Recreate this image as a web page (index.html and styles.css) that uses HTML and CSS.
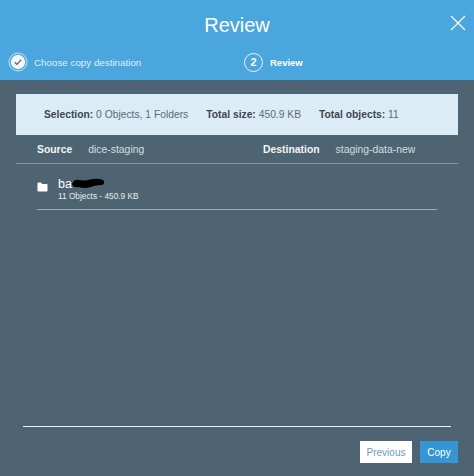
FILE: index.html
```html
<!DOCTYPE html>
<html lang="en">
<head>
    <meta charset="UTF-8">
    <meta name="viewport" content="width=device-width, initial-scale=1.0">
    <title>Review</title>
    <link rel="stylesheet" href="styles.css">
</head>
<body>
    <div class="modal">
        <!-- Header with steps -->
        <header class="modal-header">
            <h1>Review</h1>
            <svg class="close" width="16" height="16" viewBox="0 0 16 16">
                <path d="M1 1 L15 15 M15 1 L1 15" stroke="#ffffff" stroke-width="1.2" fill="none"/>
            </svg>
            <div class="steps">
                <div class="step done">
                    <svg width="20" height="20" viewBox="0 0 20 20">
                        <circle cx="10" cy="10" r="9" fill="none" stroke="#dff0fb" stroke-width="0.8"/>
                        <circle cx="10" cy="10" r="7.2" fill="#f4f8fb"/>
                        <path d="M6.8 10.2 L9 12.4 L13.2 7.6" fill="none" stroke="#56636f" stroke-width="1.3"/>
                    </svg>
                    <span>Choose copy destination</span>
                </div>
                <div class="step current">
                    <span class="step-num">2</span>
                    <span>Review</span>
                </div>
            </div>
        </header>

        <main class="modal-body">
            <!-- Summary -->
            <div class="summary">
                <span><b>Selection:</b> 0 Objects, 1 Folders</span>
                <span><b>Total size:</b> 450.9 KB</span>
                <span><b>Total objects:</b> 11</span>
            </div>

            <!-- Source and destination -->
            <div class="buckets">
                <div class="bucket source"><b>Source</b><span>dice-staging</span></div>
                <div class="bucket"><b>Destination</b><span>staging-data-new</span></div>
            </div>

            <!-- Files -->
            <div class="file-row">
                <svg width="11" height="10" viewBox="0 0 11 10">
                    <path d="M0.5 1.5 Q0.5 0.6 1.4 0.6 H4 L5.2 1.9 H9.6 Q10.5 1.9 10.5 2.8 V8.6 Q10.5 9.5 9.6 9.5 H1.4 Q0.5 9.5 0.5 8.6 Z" fill="#ffffff"/>
                </svg>
                <div class="file-info">
                    <div class="file-name">
                        ba
                        <svg class="scribble" width="34" height="11" viewBox="0 0 34 11">
                            <path d="M1 6 Q3 1 8 2 Q14 3 19 1.5 Q27 0 32 2 Q35 5 31 7 Q24 7 20 9 Q13 11 8 9 Q2 10 1 6 Z" fill="#000000"/>
                        </svg>
                    </div>
                    <div class="file-meta">11 Objects - 450.9 KB</div>
                </div>
            </div>
        </main>

        <footer class="modal-footer">
            <div class="footer-line"></div>
            <div class="buttons">
                <button class="btn btn-prev">Previous</button>
                <button class="btn btn-copy">Copy</button>
            </div>
        </footer>
    </div>
</body>
</html>
```

FILE: styles.css
```css
* {
    box-sizing: border-box;
}

body {
    margin: 0;
    font-family: "Liberation Sans", Arial, sans-serif;
    background-color: #4f6472;
}

.modal {
    width: 474px;
    height: 476px;
    display: flex;
    flex-direction: column;
    overflow: hidden;
}

.modal-header {
    height: 81px;
    padding-top: 14px;
    background-color: #4ba6dd;
    border-bottom: 1px solid #47697f;
    color: #ffffff;
    position: relative;
}

.modal-header h1 {
    margin: 0;
    font-size: 20px;
    line-height: 23px;
    font-weight: normal;
    text-align: center;
}

.close {
    position: absolute;
    top: 15px;
    right: 8px;
}

.steps {
    display: flex;
    margin-top: 15px;
    padding-left: 8px;
}

.step {
    display: flex;
    align-items: center;
    font-size: 9.8px;
    height: 20px;
}

.step.done {
    width: 236px;
    gap: 6px;
    color: #dff0fb;
}

.step.current {
    gap: 7px;
    font-weight: bold;
    font-size: 9.5px;
}

.step-num {
    width: 19px;
    height: 19px;
    border: 1.5px solid #e8f4fb;
    border-radius: 50%;
    display: flex;
    justify-content: center;
    align-items: center;
    font-size: 11px;
    font-weight: bold;
}

.modal-body {
    flex: 1;
    padding: 13px 16px 0;
}

.summary {
    height: 41px;
    padding-left: 28px;
    display: flex;
    align-items: center;
    gap: 18px;
    background-color: #dbecf7;
    color: #5c6a75;
    font-size: 10.3px;
}

.summary b {
    color: #3b4650;
}

.buckets {
    height: 29px;
    padding-left: 21px;
    display: flex;
    align-items: center;
    border-bottom: 1px solid #7f929e;
    color: #d3dde3;
    font-size: 10.4px;
}

.bucket {
    display: flex;
    gap: 16px;
}

.bucket.source {
    width: 226px;
}

.bucket b {
    color: #f2f6f8;
}

.file-row {
    width: 400px;
    height: 46px;
    margin-left: 21px;
    display: flex;
    align-items: center;
    gap: 10px;
    border-bottom: 1px solid #9fafb9;
    color: #ffffff;
}

.file-info {
    padding-top: 5px;
}

.file-name {
    font-size: 12.5px;
    line-height: 14px;
    display: flex;
    align-items: center;
}

.scribble {
    margin-left: -1px;
}

.file-meta {
    font-size: 8.3px;
    line-height: 11px;
    color: #e6ecef;
}

.modal-footer {
    height: 50px;
    padding: 0 16px 13px 23px;
}

.footer-line {
    width: 428px;
    height: 1px;
    background-color: #eef2f4;
}

.buttons {
    margin-top: 14px;
    display: flex;
    justify-content: flex-end;
    gap: 8px;
}

.btn {
    height: 22px;
    padding: 0;
    border: none;
    font-family: inherit;
    font-size: 10px;
}

.btn-prev {
    width: 52px;
    background-color: #ffffff;
    color: #6d9cbb;
}

.btn-copy {
    width: 38px;
    background-color: #3497d3;
    color: #ffffff;
}
```
